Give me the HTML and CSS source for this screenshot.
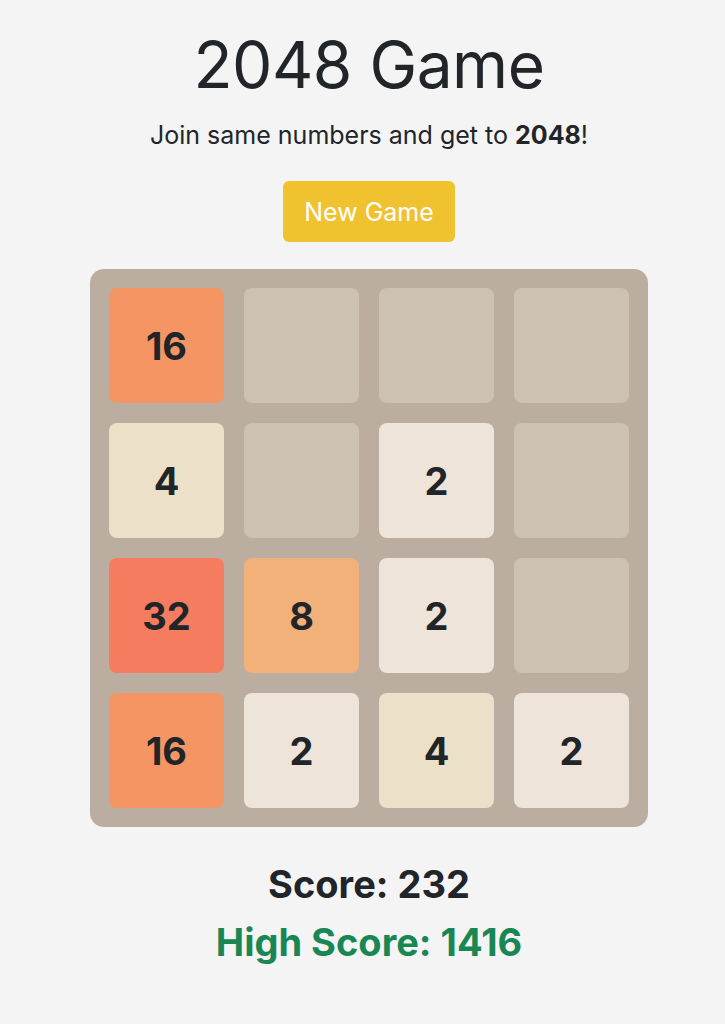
FILE: index.html
```html
<!DOCTYPE html>
<html lang="en">
<head>
<meta charset="utf-8">
<title>2048 Game</title>
<link rel="stylesheet" href="styles.css">
</head>
<body>
<main class="game">
  <h1 class="title">2048 Game</h1>
  <p class="subtitle">Join same numbers and get to <strong>2048</strong>!</p>
  <button class="new-game" type="button">New Game</button>
  <div class="board">
    <div class="tile t16">16</div>
    <div class="tile"></div>
    <div class="tile"></div>
    <div class="tile"></div>

    <div class="tile t4">4</div>
    <div class="tile"></div>
    <div class="tile t2">2</div>
    <div class="tile"></div>

    <div class="tile t32">32</div>
    <div class="tile t8">8</div>
    <div class="tile t2">2</div>
    <div class="tile"></div>

    <div class="tile t16">16</div>
    <div class="tile t2">2</div>
    <div class="tile t4">4</div>
    <div class="tile t2">2</div>
  </div>
  <div class="score">Score: 232</div>
  <div class="high-score">High Score: 1416</div>
</main>
</body>
</html>
```
FILE: styles.css
```css
html, body {
  margin: 0;
  padding: 0;
  background: #f4f4f4;
}

body {
  font-family: Inter, "Noto Sans", sans-serif;
  color: #212529;
}

.game {
  display: flex;
  flex-direction: column;
  align-items: center;
  padding: 23px 0 0 13px;
}

.title {
  margin: 0;
  font-size: 64px;
  font-weight: 400;
  line-height: 84px;
  letter-spacing: -0.5px;
}

.subtitle {
  margin: 13px 0 0;
  font-size: 25px;
  line-height: 30px;
}

.subtitle strong {
  font-weight: 700;
}

.new-game {
  margin-top: 31px;
  width: 172px;
  height: 61px;
  border: none;
  border-radius: 6px;
  background: #f0c22f;
  color: #ffffff;
  font-family: inherit;
  font-size: 25px;
}

.board {
  margin-top: 27px;
  width: 558px;
  box-sizing: border-box;
  padding: 19px;
  background: #bbada0;
  border-radius: 14px;
  display: grid;
  grid-template-columns: repeat(4, 115px);
  grid-auto-rows: 115px;
  gap: 20px;
}

.tile {
  border-radius: 8px;
  background: #cdc1b4;
  display: flex;
  align-items: center;
  justify-content: center;
  font-size: 38px;
  font-weight: 700;
  color: #212529;
}

.t2 { background: #eee4da; }
.t4 { background: #ede0c8; }
.t8 { background: #f2b179; }
.t16 { background: #f59563; }
.t32 { background: #f67c5f; }

.score {
  margin-top: 34px;
  font-size: 38px;
  font-weight: 700;
  line-height: 46px;
}

.high-score {
  margin-top: 12px;
  font-size: 38px;
  font-weight: 700;
  line-height: 46px;
  color: #198754;
}
```
